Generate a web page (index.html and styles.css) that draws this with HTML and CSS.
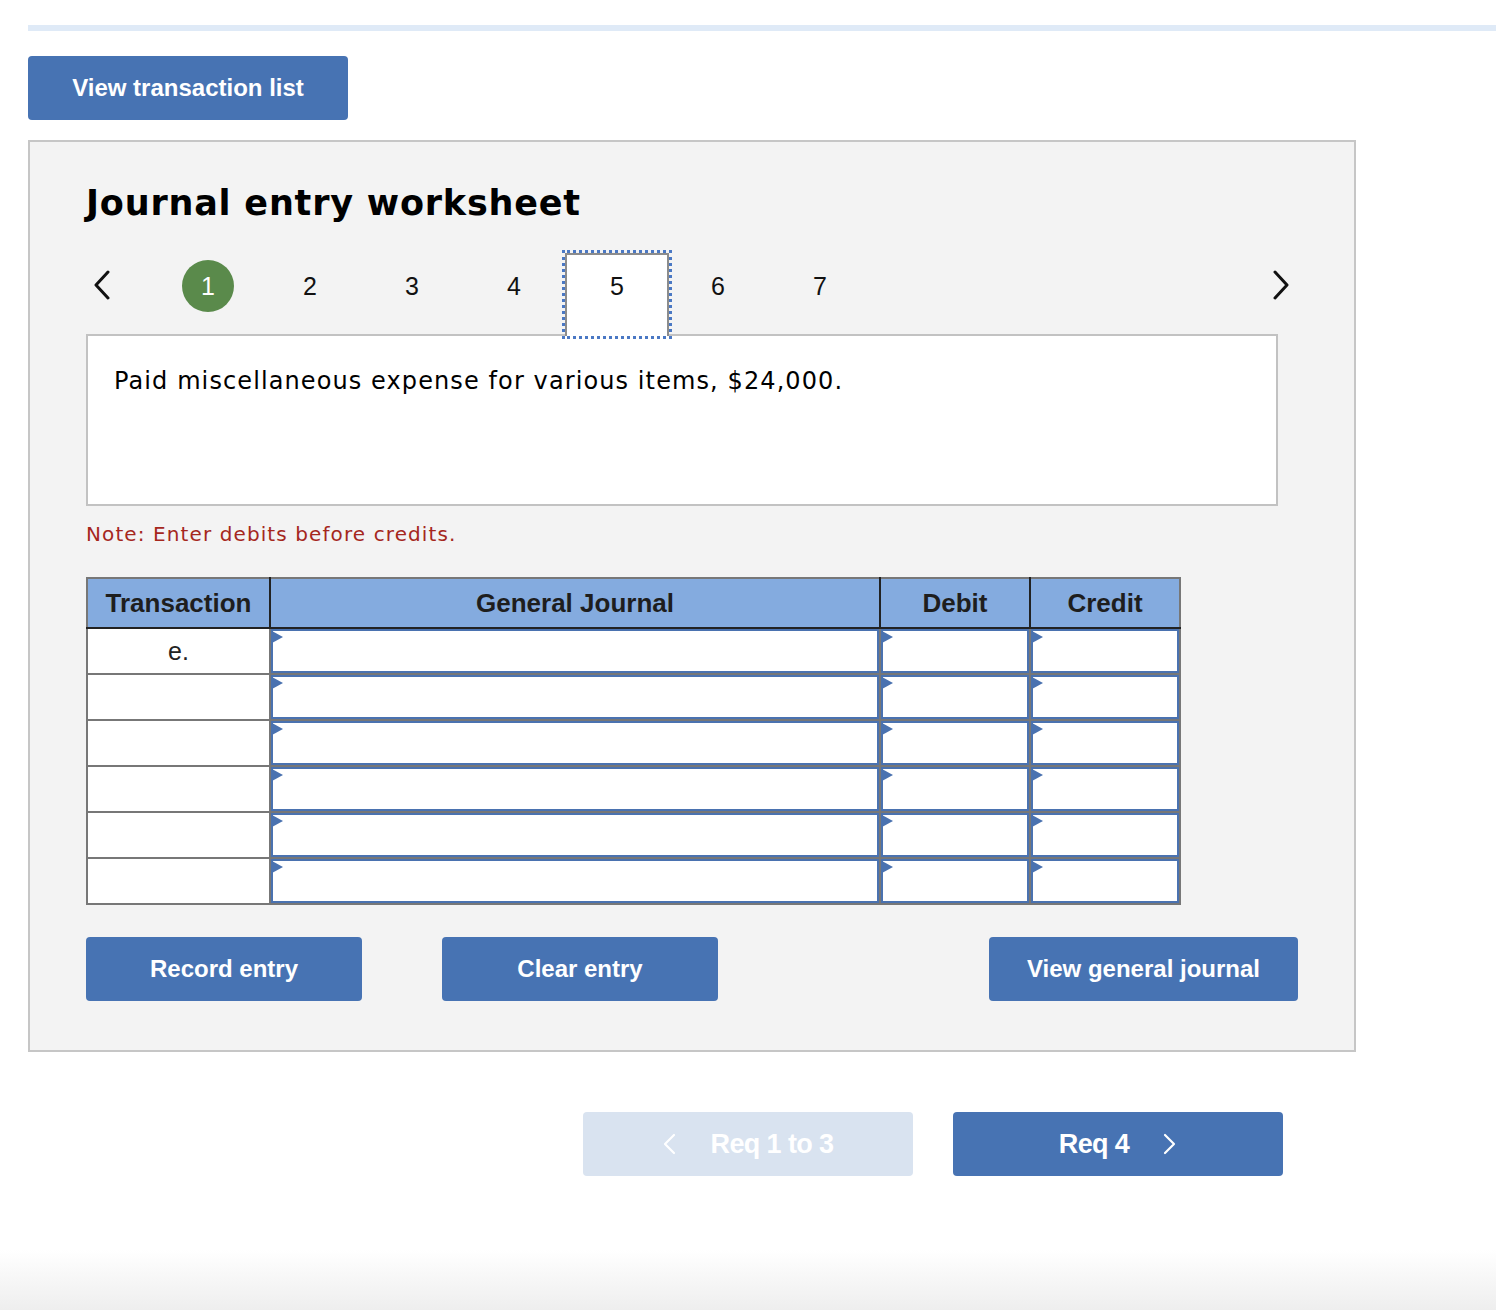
FILE: index.html
```html
<!DOCTYPE html>
<html lang="en">
<head>
<meta charset="utf-8">
<title>Journal entry worksheet</title>
<link rel="stylesheet" href="styles.css">
</head>
<body>
<div class="topbar"></div>
<button class="btn btn-top">View transaction list</button>

<section class="panel">
  <h1 class="title">Journal entry worksheet</h1>

  <nav class="pager">
    <span class="pager-arrow pager-prev">
      <svg width="18" height="30" viewBox="0 0 18 30"><polyline points="15,2 3,15 15,28" fill="none" stroke="#111" stroke-width="3" stroke-linecap="round" stroke-linejoin="round"/></svg>
    </span>
    <div class="pager-items">
      <span class="pager-item"><span class="pager-done">1</span></span>
      <span class="pager-item">2</span>
      <span class="pager-item">3</span>
      <span class="pager-item">4</span>
      <span class="pager-item pager-current">5</span>
      <span class="pager-item">6</span>
      <span class="pager-item">7</span>
    </div>
    <span class="pager-arrow pager-next">
      <svg width="18" height="30" viewBox="0 0 18 30"><polyline points="3,2 15,15 3,28" fill="none" stroke="#111" stroke-width="3" stroke-linecap="round" stroke-linejoin="round"/></svg>
    </span>
  </nav>

  <div class="desc">Paid miscellaneous expense for various items, $24,000.</div>

  <p class="note">Note: Enter debits before credits.</p>

  <table class="journal">
    <thead>
      <tr>
        <th class="col-tx">Transaction</th>
        <th class="col-gj">General Journal</th>
        <th class="col-amt">Debit</th>
        <th class="col-amt">Credit</th>
      </tr>
    </thead>
    <tbody>
      <tr><td class="tx">e.</td><td class="in"><div class="field"></div></td><td class="in"><div class="field"></div></td><td class="in"><div class="field"></div></td></tr>
      <tr><td class="tx"></td><td class="in"><div class="field"></div></td><td class="in"><div class="field"></div></td><td class="in"><div class="field"></div></td></tr>
      <tr><td class="tx"></td><td class="in"><div class="field"></div></td><td class="in"><div class="field"></div></td><td class="in"><div class="field"></div></td></tr>
      <tr><td class="tx"></td><td class="in"><div class="field"></div></td><td class="in"><div class="field"></div></td><td class="in"><div class="field"></div></td></tr>
      <tr><td class="tx"></td><td class="in"><div class="field"></div></td><td class="in"><div class="field"></div></td><td class="in"><div class="field"></div></td></tr>
      <tr><td class="tx"></td><td class="in"><div class="field"></div></td><td class="in"><div class="field"></div></td><td class="in"><div class="field"></div></td></tr>
    </tbody>
  </table>

  <div class="actions">
    <button class="btn btn-action">Record entry</button>
    <button class="btn btn-action">Clear entry</button>
    <button class="btn btn-action btn-wide">View general journal</button>
  </div>
</section>

<div class="reqnav">
  <button class="btn btn-req btn-disabled">
    <svg width="14" height="22" viewBox="0 0 14 22"><polyline points="12,2 3,11 12,20" fill="none" stroke="#fff" stroke-width="2.2" stroke-linecap="round" stroke-linejoin="round"/></svg>
    <span>Req 1 to 3</span>
  </button>
  <button class="btn btn-req">
    <span>Req 4</span>
    <svg width="14" height="22" viewBox="0 0 14 22"><polyline points="2,2 11,11 2,20" fill="none" stroke="#fff" stroke-width="2.2" stroke-linecap="round" stroke-linejoin="round"/></svg>
  </button>
</div>
</body>
</html>
```

FILE: styles.css
```css
html, body {
  margin: 0;
  padding: 0;
}
body {
  min-height: 1310px;
  background: linear-gradient(to bottom, #ffffff 0, #ffffff 1250px, #eeeeee 1310px);
  font-family: "Liberation Sans", Arial, sans-serif;
  color: #111;
}
.topbar {
  margin: 25px 0 0 28px;
  height: 6px;
  background: #dfeaf7;
}
.btn {
  border: none;
  border-radius: 4px;
  background: #4773b3;
  color: #fff;
  font-family: "Liberation Sans", Arial, sans-serif;
  font-weight: bold;
  font-size: 24px;
  cursor: pointer;
  padding: 0;
}
.btn-top {
  display: block;
  margin: 25px 0 0 28px;
  width: 320px;
  height: 64px;
}
.panel {
  box-sizing: border-box;
  margin: 20px 0 0 28px;
  width: 1328px;
  border: 2px solid #c6c6c6;
  background: #f3f3f3;
  padding: 40px 56px 49px 56px;
}
.title {
  margin: 0;
  font-family: "DejaVu Sans", Verdana, sans-serif;
  font-weight: bold;
  font-size: 35px;
  line-height: 42px;
  color: #000;
  letter-spacing: 0.8px;
}
.pager {
  display: flex;
  align-items: flex-start;
  height: 81px;
  margin-top: 29px;
}
.pager-arrow {
  display: flex;
  height: 64px;
  align-items: center;
}
.pager-prev {
  margin-left: 7px;
  margin-right: 46px;
}
.pager-next {
  margin-left: auto;
  margin-right: 8px;
}
.pager-items {
  display: flex;
}
.pager-item {
  box-sizing: border-box;
  width: 102px;
  height: 83px;
  padding-top: 19px;
  text-align: center;
  font-size: 25px;
  line-height: 28px;
  color: #111;
}
.pager-done {
  display: inline-flex;
  align-items: center;
  justify-content: center;
  width: 52px;
  height: 52px;
  margin-top: -12px;
  border-radius: 50%;
  background: #5a8a4b;
  color: #fff;
}
.pager-current {
  position: relative;
  z-index: 1;
  width: 104px;
  margin-right: -2px;
  background: #fff;
  border: 2px solid #8c8c8c;
  border-bottom: none;
  padding-top: 17px;
  outline: 3px dotted #4a78c4;
}
.desc {
  box-sizing: border-box;
  width: 1192px;
  height: 172px;
  background: #fff;
  border: 2px solid #c2c2c2;
  padding: 31px 26px 0 26px;
  font-family: "DejaVu Sans", Verdana, sans-serif;
  font-size: 24px;
  line-height: 29px;
  letter-spacing: 1.1px;
  color: #000;
}
.note {
  margin: 16px 0 0 0;
  font-family: "DejaVu Sans", Verdana, sans-serif;
  font-size: 20px;
  line-height: 24px;
  letter-spacing: 1.1px;
  color: #a5271d;
}
.journal {
  margin-top: 31px;
  border-collapse: collapse;
  width: 1094px;
  table-layout: fixed;
  border: 2px solid #777;
}
.journal th {
  height: 48px;
  padding: 0;
  background: #84abdf;
  color: #1e1e1e;
  font-size: 26px;
  font-weight: bold;
  text-align: center;
  border-left: 2px solid #222;
  border-right: 2px solid #222;
  border-bottom: 2px solid #222;
  border-top: 2px solid #777;
}
.journal th:first-child {
  border-left-color: #777;
}
.journal th:last-child {
  border-right-color: #777;
}
.col-tx { width: 181px; }
.col-gj { width: 608px; }
.col-amt { width: 148px; }
.journal td {
  height: 44px;
  padding: 0;
  border: 2px solid #777;
  background: #fff;
}
.journal td.tx {
  text-align: center;
  font-size: 25px;
  color: #222;
  vertical-align: middle;
}
.journal td.in {
  vertical-align: top;
}
.field {
  position: relative;
  box-sizing: border-box;
  height: 44px;
  border: 2px solid #4a72b0;
  background: #fff;
}
.field::before {
  content: "";
  position: absolute;
  left: -1px;
  top: 0;
  border-top: 6px solid transparent;
  border-bottom: 6px solid transparent;
  border-left: 11px solid #4a72b0;
}
.actions {
  display: flex;
  gap: 80px;
  margin-top: 32px;
}
.btn-action {
  width: 276px;
  height: 64px;
}
.btn-wide {
  width: 309px;
  margin-left: auto;
}
.reqnav {
  display: flex;
  gap: 40px;
  margin: 60px 0 0 583px;
}
.btn-req {
  display: flex;
  align-items: center;
  justify-content: center;
  gap: 34px;
  width: 330px;
  height: 64px;
  font-size: 27px;
  letter-spacing: -0.6px;
}
.btn-disabled {
  background: #d9e3f0;
  cursor: default;
}
```
